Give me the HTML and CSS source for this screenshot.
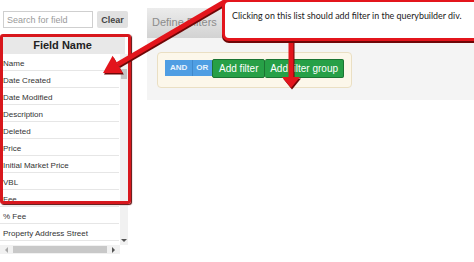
FILE: index.html
```html
<html>

<head>
  <title>Query builder</title>
  <meta charset="UTF-8">
  <link rel="stylesheet" href="styles.css">
</head>

<body>
  <div class="page">
    <aside class="fields">
      <div class="search">
        <input class="search-input" type="text" placeholder="Search for field">
        <button class="btn-clear">Clear</button>
      </div>
      <div class="field-table">
        <div class="field-head">Field Name</div>
        <div class="field-body">
          <ul class="field-rows">
            <li>Name</li>
            <li>Date Created</li>
            <li>Date Modified</li>
            <li>Description</li>
            <li>Deleted</li>
            <li>Price</li>
            <li>Initial Market Price</li>
            <li>VBL</li>
            <li>Fee</li>
            <li>% Fee</li>
            <li>Property Address Street</li>
            <li>Property Address City</li>
          </ul>
          <div class="vscroll">
            <span class="vthumb"></span>
            <span class="varrow"></span>
          </div>
        </div>
        <div class="hscroll">
          <span class="harrow harrow-left"></span>
          <span class="hthumb"></span>
          <span class="harrow harrow-right"></span>
        </div>
      </div>
    </aside>

    <section class="filters">
      <div class="filters-head">Define Filters</div>
      <div class="filters-body">
        <div class="rules-group">
          <div class="conditions">
            <span class="cond">AND</span>
            <span class="cond cond-or">OR</span>
          </div>
          <button class="btn-add btn-filter">Add filter</button>
          <button class="btn-add btn-group">Add filter group</button>
        </div>
      </div>
    </section>

    <!-- annotations drawn over the screenshot -->
    <div class="highlight"></div>
    <svg class="arrows" width="474" height="262" viewBox="0 0 474 262">
      <g fill="#6e0707" stroke="#6e0707" transform="translate(1 1.5)">
        <line x1="117.7" y1="64.4" x2="226" y2="1" stroke-width="5" />
        <polygon points="103,73 122.8,73 112.6,55.8" stroke="none" />
        <line x1="291" y1="40" x2="291" y2="78" stroke-width="5" />
        <polygon points="282,77 300,77 291,88" stroke="none" />
      </g>
      <g fill="#e3151c" stroke="#e3151c">
        <line x1="117.7" y1="64.4" x2="226" y2="1" stroke-width="5" />
        <polygon points="103,73 122.8,73 112.6,55.8" stroke="none" />
        <line x1="291" y1="40" x2="291" y2="78" stroke-width="5" />
        <polygon points="282,77 300,77 291,88" stroke="none" />
      </g>
    </svg>
    <div class="callout">Clicking on this list should add filter in the querybuilder div.</div>
  </div>
</body>

</html>
```

FILE: styles.css
```css
body {
  font-family: "Liberation Sans", Arial, sans-serif;
  background-color: white;
  color: #333;
  margin: 0;
  padding: 0;
}

.page {
  position: relative;
  display: flex;
  align-items: flex-start;
  width: 474px;
  height: 262px;
  overflow: hidden;
}

/** 字段列表 */
.fields {
  width: 131px;
  flex-shrink: 0;
  padding-top: 11px;
}

.search {
  display: flex;
  gap: 4px;
  padding-left: 3px;
}

.search-input {
  width: 90px;
  height: 17px;
  box-sizing: border-box;
  border: 1px solid #cfcfcf;
  padding: 0 3px;
  font-family: inherit;
  font-size: 9px;
  color: #333;
}

.search-input::placeholder {
  color: #9a9a9a;
}

.btn-clear {
  width: 31px;
  height: 17px;
  padding: 0;
  border: none;
  border-radius: 2px;
  background-color: #e1e1e1;
  font-family: inherit;
  font-size: 9px;
  font-weight: bold;
  color: #444;
}

.field-table {
  margin-top: 9px;
  width: 128px;
}

.field-head {
  height: 17px;
  line-height: 17px;
  text-align: center;
  font-size: 11px;
  font-weight: bold;
  color: #222;
  background-color: #e8e8e8;
  margin-right: 3px;
}

.field-body {
  display: flex;
  height: 191px;
}

.field-rows {
  list-style: none;
  margin: 0;
  padding: 0;
  width: 120px;
  overflow: hidden;
}

.field-rows li {
  height: 16px;
  line-height: 19px;
  border-bottom: 1px solid #e6e6e6;
  padding-left: 3px;
  font-size: 8px;
  color: #333;
  white-space: nowrap;
  overflow: hidden;
}

/* 假滚动条 */
.vscroll {
  width: 8px;
  margin-left: 1px;
  background-color: #f1f1f1;
  display: flex;
  flex-direction: column;
  align-items: center;
}

.vthumb {
  width: 6px;
  height: 10px;
  margin-top: 15px;
  background-color: #c4c4c4;
}

.varrow {
  margin: auto 0 3px;
  border-left: 3px solid transparent;
  border-right: 3px solid transparent;
  border-top: 3px solid #555;
}

.hscroll {
  display: flex;
  align-items: center;
  width: 120px;
  height: 9px;
  background-color: #f1f1f1;
}

.harrow {
  margin: 0 5px;
  border-top: 3px solid transparent;
  border-bottom: 3px solid transparent;
}

.harrow-left {
  border-right: 3px solid #aaa;
}

.harrow-right {
  border-left: 3px solid #555;
}

.hthumb {
  flex: 1;
  height: 7px;
  background-color: #c8c8c8;
}

/** 过滤器区域 */
.filters {
  flex: 1;
  margin: 8px 0 0 16px;
}

.filters-head {
  height: 30px;
  line-height: 28px;
  padding-left: 5px;
  font-size: 11px;
  color: #8c8c8c;
  background: linear-gradient(#ececec, #d2d2d2);
}

.filters-body {
  height: 62px;
  box-sizing: border-box;
  padding: 14px 10px;
  background-color: #f4f4f4;
}

.rules-group {
  display: flex;
  align-items: flex-start;
  width: 195px;
  height: 36px;
  box-sizing: border-box;
  padding: 6px 7px 0;
  background-color: #fcf7ea;
  border: 1px solid #eadfc3;
  border-radius: 4px;
}

.conditions {
  display: flex;
  margin-top: 1px;
}

.cond {
  height: 16px;
  line-height: 16px;
  padding: 0 5px;
  font-size: 8px;
  font-weight: bold;
  color: #e8f2fc;
  background-color: #4f9ee3;
}

.cond-or {
  width: 20px;
  padding: 0 0 0 3px;
  box-sizing: border-box;
  border-left: 1px solid #4089cc;
}

.btn-add {
  height: 19px;
  padding: 0;
  border: 1px solid #1b7432;
  border-radius: 2px;
  background-color: #27a047;
  color: white;
  font-family: inherit;
  font-size: 10px;
}

.btn-filter {
  width: 55px;
}

.btn-group {
  width: 82px;
  border-left: none;
}

/** 标注 */
.highlight {
  position: absolute;
  left: 0;
  top: 34px;
  width: 131px;
  height: 170px;
  box-sizing: border-box;
  border: 3px solid #d8171d;
  border-radius: 3px;
  box-shadow: 1px 1px 1px #5c0a0a;
}

.arrows {
  position: absolute;
  left: 0;
  top: 0;
}

.callout {
  position: absolute;
  left: 222px;
  top: -1px;
  width: 264px;
  height: 42px;
  box-sizing: border-box;
  border: 3px solid #e3151c;
  border-radius: 7px;
  box-shadow: 0 2px 0 #6e0707;
  background-color: white;
  padding: 8px 0 0 7px;
  font-family: Lato, "Open Sans", sans-serif;
  font-size: 8.9px;
  color: #1a1a1a;
  white-space: nowrap;
}
```
